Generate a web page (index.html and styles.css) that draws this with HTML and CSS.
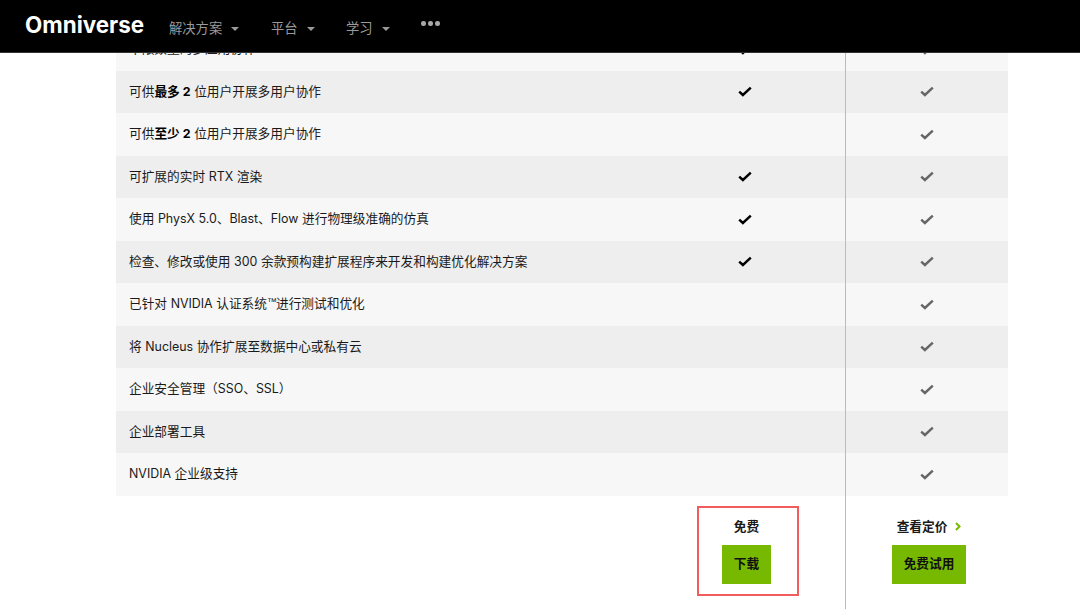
FILE: index.html
```html
<!DOCTYPE html>
<html lang="zh-CN">
<head>
<meta charset="utf-8">
<title>Omniverse</title>
<link rel="stylesheet" href="styles.css">
</head>
<body>
<svg class="defs" width="0" height="0"><symbol id="chk" viewBox="0 0 14 11"><path d="M1.2 5.6 4.9 9 12.8 1.6" fill="none" stroke="currentColor" stroke-width="2.4"/></symbol></svg>
<header class="nav">
  <div class="logo">Omniverse</div>
  <div class="menu"><span class="item">解决方案<i class="caret"></i></span><span class="item">平台<i class="caret"></i></span><span class="item">学习<i class="caret"></i></span><span class="dots"><b></b><b></b><b></b></span></div>
</header>
<main class="page">
  <div class="table">
    <div class="row light"><div class="name">不限数量的多应用协作</div><div class="free"><svg class="chk"><use href="#chk"/></svg></div><div class="ent"><svg class="chk"><use href="#chk"/></svg></div></div>
    <div class="row dark"><div class="name">可供<b>最多 <span class="en">2</span></b> 位用户开展多用户协作</div><div class="free"><svg class="chk"><use href="#chk"/></svg></div><div class="ent"><svg class="chk"><use href="#chk"/></svg></div></div>
    <div class="row light"><div class="name">可供<b>至少 <span class="en">2</span></b> 位用户开展多用户协作</div><div class="free"></div><div class="ent"><svg class="chk"><use href="#chk"/></svg></div></div>
    <div class="row dark"><div class="name">可扩展的实时 <span class="en">RTX</span> 渲染</div><div class="free"><svg class="chk"><use href="#chk"/></svg></div><div class="ent"><svg class="chk"><use href="#chk"/></svg></div></div>
    <div class="row light"><div class="name">使用 <span class="en">PhysX 5.0</span>、<span class="en">Blast</span>、<span class="en">Flow</span> 进行物理级准确的仿真</div><div class="free"><svg class="chk"><use href="#chk"/></svg></div><div class="ent"><svg class="chk"><use href="#chk"/></svg></div></div>
    <div class="row dark"><div class="name">检查、修改或使用 <span class="en">300</span> 余款预构建扩展程序来开发和构建优化解决方案</div><div class="free"><svg class="chk"><use href="#chk"/></svg></div><div class="ent"><svg class="chk"><use href="#chk"/></svg></div></div>
    <div class="row light"><div class="name">已针对 <span class="en">NVIDIA</span> 认证系统<sup class="tm">™</sup>进行测试和优化</div><div class="free"></div><div class="ent"><svg class="chk"><use href="#chk"/></svg></div></div>
    <div class="row dark"><div class="name">将 <span class="en">Nucleus</span> 协作扩展至数据中心或私有云</div><div class="free"></div><div class="ent"><svg class="chk"><use href="#chk"/></svg></div></div>
    <div class="row light"><div class="name">企业安全管理（<span class="en">SSO</span>、<span class="en">SSL</span>）</div><div class="free"></div><div class="ent"><svg class="chk"><use href="#chk"/></svg></div></div>
    <div class="row dark"><div class="name">企业部署工具</div><div class="free"></div><div class="ent"><svg class="chk"><use href="#chk"/></svg></div></div>
    <div class="row light"><div class="name"><span class="en">NVIDIA</span> 企业级支持</div><div class="free"></div><div class="ent"><svg class="chk"><use href="#chk"/></svg></div></div>
    <div class="row foot">
      <div class="name"></div>
      <div class="free cta"><div class="marked"><div class="label">免费</div><div class="btn">下载</div></div></div>
      <div class="ent cta"><div class="label">查看定价<svg class="arrow" viewBox="0 0 6 9"><path d="M1 1 4.5 4.5 1 8" fill="none" stroke="#76b900" stroke-width="2"/></svg></div><div class="btn">免费试用</div></div>
    </div>
  </div>
</main>
</body>
</html>
```
FILE: styles.css
```css
* { box-sizing: border-box; }
html, body { margin: 0; height: 609px; overflow: hidden; background: #fff; }
body { font-family: Inter, "Noto Sans CJK SC", sans-serif; color: #1a1a1a; position: relative; }
.defs { position: absolute; }
.nav {
  position: absolute; top: 0; left: 0; right: 0; height: 53px; z-index: 2;
  background: #000; border-bottom: 1px solid #333;
  display: flex; padding-left: 25px;
}
.logo { color: #fff; font: 700 22.4px/50px Inter, sans-serif; width: 144px; }
.menu { display: flex; color: #9a9a9a; font-size: 13.3px; line-height: 57px; }
.item { display: flex; align-items: center; padding-top: 4px; }
.item:nth-child(1) { width: 102px; }
.item:nth-child(2) { width: 75px; }
.item:nth-child(3) { width: 75px; }
.caret { margin-left: 9px; margin-top: 2px; border: 4px solid transparent; border-top-color: #9a9a9a; border-bottom-width: 0; }
.dots { display: flex; gap: 2.5px; padding-top: 21px; }
.dots b { width: 4.5px; height: 4.5px; border-radius: 50%; background: #a8a8a8; }
.page { padding: 28px 72px 0 116px; }
.table { display: flex; flex-direction: column; }
.row { display: grid; grid-template-columns: 528px 201px 163px; height: 42.5px; font-size: 12.7px; }
.light { background: #f7f7f7; }
.dark { background: #eee; }
.foot { background: transparent; height: 120px; }
.name { padding-left: 13px; line-height: 42.9px; white-space: nowrap; }
.en { font-size: 12.4px; }
.name b { font-weight: 700; color: #000; }
.tm { font: 10px/0 "Liberation Sans", sans-serif; vertical-align: 3px; margin-right: -1px; }
.free, .ent { display: flex; align-items: center; justify-content: center; }
.ent { border-left: 1px solid #bbb; color: #666; }
.free { color: #000; }
.chk { width: 14px; height: 11px; margin-bottom: 0.5px; }
.cta { flex-direction: column; justify-content: flex-start; padding-top: 10px; }
.marked {
  width: 102px; height: 90px; border: 2px solid #f25c5c; margin-left: 7px;
  display: flex; flex-direction: column; align-items: center; padding-right: 3px;
}
.label { font-size: 12.7px; font-weight: 700; color: #1a1a1a; line-height: 18px; margin-top: 10px; white-space: nowrap; }
.ent.cta { padding-top: 22px; padding-left: 4px; }
.ent.cta .label { margin-top: 0; }
.arrow { width: 6px; height: 9px; margin-left: 8px; }
.btn { margin-top: 9px; height: 39px; padding: 0 12px; background: #76b900; color: #111; font-size: 12.7px; font-weight: 700; line-height: 38px; white-space: nowrap; }
.ent .btn { padding: 0 11.6px; }
```
